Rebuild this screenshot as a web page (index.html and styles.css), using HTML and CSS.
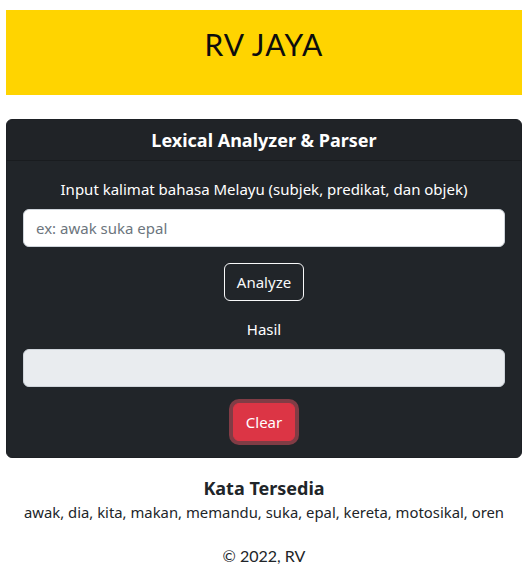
FILE: index.html
```html
<!DOCTYPE html>
<html lang="ms">
<head>
<meta charset="utf-8">
<title>RV JAYA</title>
<link rel="stylesheet" href="styles.css">
</head>
<body>
<div class="page">
  <header class="brand">
    <h1 class="brand-title">RV JAYA</h1>
  </header>

  <section class="card">
    <div class="card-header">
      <h5 class="card-title">Lexical Analyzer &amp; Parser</h5>
    </div>
    <div class="card-body">
      <label class="field-label" for="kalimat">Input kalimat bahasa Melayu (subjek, predikat, dan objek)</label>
      <input id="kalimat" class="form-control" type="text" placeholder="ex: awak suka epal">
      <div class="btn-row">
        <button class="btn btn-outline-light" type="button">Analyze</button>
      </div>
      <label class="field-label" for="hasil">Hasil</label>
      <input id="hasil" class="form-control readonly" type="text" readonly>
      <div class="btn-row">
        <button class="btn btn-danger focused" type="button">Clear</button>
      </div>
    </div>
  </section>

  <section class="words">
    <h5 class="words-title">Kata Tersedia</h5>
    <p class="words-list">awak, dia, kita, makan, memandu, suka, epal, kereta, motosikal, oren</p>
  </section>

  <footer class="footer">© 2022, RV</footer>
</div>
</body>
</html>
```

FILE: styles.css
```css
* { box-sizing: border-box; }

html, body {
  margin: 0;
  padding: 0;
  background: #fff;
}

body {
  font-family: "Noto Sans", "Open Sans", sans-serif;
  font-size: 16px;
  line-height: 1.5;
  color: #212529;
}

.page {
  width: 516px;
  margin-left: 6px;
  padding-top: 10px;
}

.brand {
  background: #ffd400;
  height: 85px;
  padding-top: 16px;
  text-align: center;
}

.brand-title {
  margin: 0;
  font-family: "Lato", sans-serif;
  font-weight: 400;
  font-size: 30px;
  line-height: 36px;
  letter-spacing: 1px;
  color: #0d0d0d;
}

.card {
  margin-top: 24px;
  background: #212529;
  border: 1px solid #1d2024;
  border-radius: 6px;
  color: #fff;
}

.card-header {
  padding: 8px 16px;
  border-bottom: 1px solid #191c1f;
  border-radius: 6px 6px 0 0;
  background: #202327;
  text-align: center;
}

.card-title {
  margin: 0;
  font-size: 18px;
  font-weight: 700;
  line-height: 24px;
}

.card-body {
  padding: 16px;
  display: flex;
  flex-direction: column;
  align-items: stretch;
  text-align: center;
}

.field-label {
  display: block;
  margin-bottom: 8px;
  font-size: 15px;
  line-height: 24px;
}

.form-control {
  display: block;
  width: 100%;
  height: 38px;
  padding: 6px 12px;
  font-family: inherit;
  font-size: 15px;
  color: #212529;
  background: #fff;
  border: 1px solid #ced4da;
  border-radius: 6px;
  outline: none;
}

.form-control::placeholder { color: #6c757d; }

.form-control.readonly { background: #e9ecef; }

.btn-row {
  display: flex;
  justify-content: center;
  margin: 16px 0;
}

.btn-row:last-child { margin-bottom: 0; }

.btn {
  height: 38px;
  padding: 6px 12px;
  font-family: inherit;
  font-size: 15px;
  line-height: 24px;
  border-radius: 6px;
  cursor: pointer;
}

.btn-outline-light {
  background: transparent;
  color: #f8f9fa;
  border: 1px solid #f8f9fa;
}

.btn-danger {
  background: #dc3545;
  color: #fff;
  border: 1px solid #dc3545;
}

.btn-danger.focused {
  box-shadow: 0 0 0 4px rgba(225, 83, 97, 0.5);
}

.words {
  margin-top: 18px;
  text-align: center;
}

.words-title {
  margin: 0;
  font-size: 18px;
  font-weight: 700;
  line-height: 24px;
}

.words-list {
  margin: 0;
  font-size: 14.85px;
  line-height: 24px;
}

.footer {
  margin-top: 20px;
  text-align: center;
  font-family: "Lato", sans-serif;
  font-size: 16px;
  line-height: 24px;
}
```
